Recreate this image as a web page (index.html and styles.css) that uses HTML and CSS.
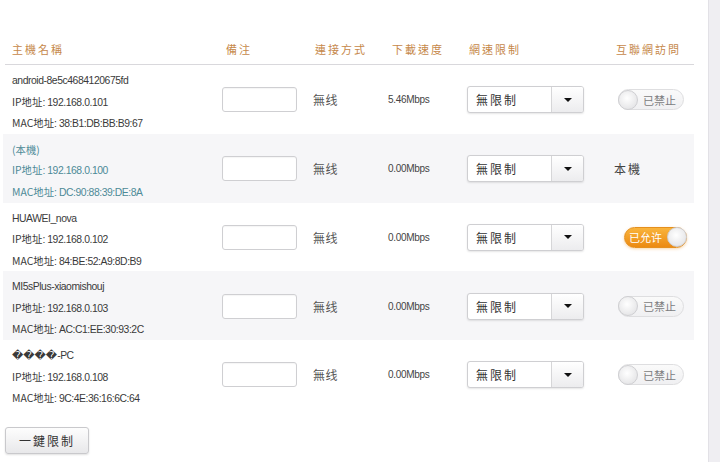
FILE: index.html
```html
<!DOCTYPE html>
<html lang="zh-Hant">
<head>
<meta charset="utf-8">
<title>終端設備</title>
<link rel="stylesheet" href="styles.css">
</head>
<body>
<div class="page">
  <div class="panel">
    <div class="table">
      <div class="head">
        <div class="h h-name">主機名稱</div>
        <div class="h h-remark">備注</div>
        <div class="h">連接方式</div>
        <div class="h h-speed">下載速度</div>
        <div class="h">網速限制</div>
        <div class="h">互聯網訪問</div>
      </div>

      <div class="row">
        <div class="name">
          <div class="host">android-8e5c4684120675fd</div>
          <div class="line"><span class="cjk">IP地址</span>: 192.168.0.101</div>
          <div class="line"><span class="cjk">MAC地址</span>: 38:B1:DB:BB:B9:67</div>
        </div>
        <div class="remark"><input class="remark-input" type="text"></div>
        <div class="conn">無线</div>
        <div class="speed">5.46Mbps</div>
        <div class="limit"><div class="select"><span class="select-text">無限制</span><span class="select-btn"><i class="caret"></i></span></div></div>
        <div class="access"><div class="toggle off"><span class="knob"></span><span class="toggle-text">已禁止</span></div></div>
      </div>

      <div class="row alt self">
        <div class="name">
          <div class="host cjk">(本機)</div>
          <div class="line"><span class="cjk">IP地址</span>: 192.168.0.100</div>
          <div class="line"><span class="cjk">MAC地址</span>: DC:90:88:39:DE:8A</div>
        </div>
        <div class="remark"><input class="remark-input" type="text"></div>
        <div class="conn">無线</div>
        <div class="speed">0.00Mbps</div>
        <div class="limit"><div class="select"><span class="select-text">無限制</span><span class="select-btn"><i class="caret"></i></span></div></div>
        <div class="access"><span class="local">本機</span></div>
      </div>

      <div class="row">
        <div class="name">
          <div class="host">HUAWEI_nova</div>
          <div class="line"><span class="cjk">IP地址</span>: 192.168.0.102</div>
          <div class="line"><span class="cjk">MAC地址</span>: 84:BE:52:A9:8D:B9</div>
        </div>
        <div class="remark"><input class="remark-input" type="text"></div>
        <div class="conn">無线</div>
        <div class="speed">0.00Mbps</div>
        <div class="limit"><div class="select"><span class="select-text">無限制</span><span class="select-btn"><i class="caret"></i></span></div></div>
        <div class="access"><div class="toggle on"><span class="toggle-text">已允许</span><span class="knob"></span></div></div>
      </div>

      <div class="row alt">
        <div class="name">
          <div class="host">MI5sPlus-xiaomishouj</div>
          <div class="line"><span class="cjk">IP地址</span>: 192.168.0.103</div>
          <div class="line"><span class="cjk">MAC地址</span>: AC:C1:EE:30:93:2C</div>
        </div>
        <div class="remark"><input class="remark-input" type="text"></div>
        <div class="conn">無线</div>
        <div class="speed">0.00Mbps</div>
        <div class="limit"><div class="select"><span class="select-text">無限制</span><span class="select-btn"><i class="caret"></i></span></div></div>
        <div class="access"><div class="toggle off"><span class="knob"></span><span class="toggle-text">已禁止</span></div></div>
      </div>

      <div class="row">
        <div class="name">
          <div class="host"><span class="bad">����</span>-PC</div>
          <div class="line"><span class="cjk">IP地址</span>: 192.168.0.108</div>
          <div class="line"><span class="cjk">MAC地址</span>: 9C:4E:36:16:6C:64</div>
        </div>
        <div class="remark"><input class="remark-input" type="text"></div>
        <div class="conn">無线</div>
        <div class="speed">0.00Mbps</div>
        <div class="limit"><div class="select"><span class="select-text">無限制</span><span class="select-btn"><i class="caret"></i></span></div></div>
        <div class="access"><div class="toggle off"><span class="knob"></span><span class="toggle-text">已禁止</span></div></div>
      </div>
    </div>

    <button class="btn" type="button">一鍵限制</button>
  </div>
  <div class="strip"></div>
</div>
</body>
</html>
```

FILE: styles.css
```css
html, body {
  margin: 0;
  padding: 0;
}

body {
  background: #efeef2;
  font-family: "Liberation Sans", "Noto Sans CJK TC", sans-serif;
  color: #333;
  width: 720px;
  height: 462px;
  overflow: hidden;
}

.page {
  display: flex;
  height: 462px;
}

.panel {
  width: 708px;
  background: #fff;
  padding-left: 3px;
  box-sizing: border-box;
  display: flex;
  flex-direction: column;
  align-items: flex-start;
}

.strip {
  flex: 1;
  background: #efeef2;
  border-left: 1px solid #e2e1e6;
}

.table {
  width: 691px;
}

.head,
.row {
  display: grid;
  grid-template-columns: 219px 91px 75px 79px 147px 1fr;
}

.head {
  height: 65px;
  box-sizing: border-box;
  border-bottom: 1px solid #d9d8dc;
  align-items: end;
  padding-bottom: 7px;
  margin-left: 2px;
}

.h {
  font-family: "Noto Sans CJK TC", sans-serif;
  font-size: 11px;
  letter-spacing: 2px;
  color: #c6884a;
  line-height: 16px;
}

.h-name { padding-left: 7px; }
.h-remark { padding-left: 2px; }
.h-speed { padding-left: 2px; }

.row {
  height: 68.75px;
  align-items: center;
}

.row.alt {
  background: #f6f6f8;
}

.name {
  align-self: start;
  padding-top: 6px;
  padding-left: 9px;
}

.host,
.line {
  font-size: 10.4px;
  line-height: 20.5px;
  letter-spacing: -0.45px;
  white-space: nowrap;
  color: #3a3a3a;
}

.line {
  line-height: 20.5px;
}

.line .cjk,
.host.cjk {
  font-family: "Noto Sans CJK TC", sans-serif;
  letter-spacing: 0;
}

.bad {
  font-family: "DejaVu Sans", sans-serif;
  font-size: 11px;
  letter-spacing: 0;
}

.self .host,
.self .line {
  color: #4d8a97;
}

.remark-input {
  display: block;
  width: 75px;
  height: 25px;
  box-sizing: border-box;
  border: 1px solid #cfcfd2;
  border-radius: 3px;
  background: #fff;
  padding: 0;
  margin: 0;
  box-shadow: inset 0 1px 1px rgba(0, 0, 0, 0.04);
}

.conn {
  font-family: "Noto Sans CJK TC", sans-serif;
  font-size: 12px;
  letter-spacing: 0.5px;
  color: #555;
}

.speed {
  font-size: 10px;
  letter-spacing: -0.3px;
  color: #444;
}

.select {
  display: flex;
  width: 117px;
  height: 27px;
  box-sizing: border-box;
  border: 1px solid #cfcfd2;
  border-radius: 3px;
  background: #fff;
  box-shadow: 0 1px 2px rgba(0, 0, 0, 0.1);
  overflow: hidden;
}

.select-text {
  width: 84px;
  box-sizing: border-box;
  padding-left: 8px;
  font-family: "Noto Sans CJK TC", sans-serif;
  font-size: 12px;
  letter-spacing: 2px;
  line-height: 25px;
  color: #333;
  border-right: 1px solid #d6d6d8;
}

.select-btn {
  flex: 1;
  display: flex;
  align-items: center;
  justify-content: center;
  background: linear-gradient(#ffffff, #ececee);
}

.caret {
  width: 0;
  height: 0;
  border-left: 4px solid transparent;
  border-right: 4px solid transparent;
  border-top: 4px solid #111;
}

.access {
  padding-left: 4px;
}

.local {
  font-family: "Noto Sans CJK TC", sans-serif;
  font-size: 12px;
  letter-spacing: 2px;
  color: #444;
  margin-left: -4px;
}

.toggle {
  display: flex;
  align-items: center;
  height: 21px;
  box-sizing: border-box;
  border-radius: 11px;
  font-family: "Noto Sans CJK SC", sans-serif;
  font-size: 11px;
}

.toggle.off {
  width: 66px;
  border: 1px solid #dedee0;
  background: linear-gradient(#fafafa, #f0f0f2);
}

.toggle.on {
  width: 63px;
  margin-left: 6px;
  border: 1px solid #e5901e;
  background: linear-gradient(#f9b43c, #ec8a12);
  box-shadow: 0 1px 3px rgba(236, 138, 18, 0.35);
}

.knob {
  width: 20px;
  height: 20px;
  box-sizing: border-box;
  border-radius: 50%;
  border: 1px solid #cfcfd2;
  background: radial-gradient(circle at 45% 40%, #ffffff, #e4e4e6 80%);
  flex: none;
  margin: -1px;
}

.toggle.off .toggle-text {
  color: #7c7c80;
  padding-left: 6px;
}

.toggle.on .toggle-text {
  color: #fff;
  padding-left: 4px;
  flex: 1;
}

.btn {
  margin-top: 18px;
  margin-left: 2px;
  width: 84px;
  height: 27px;
  border: 1px solid #c9c9cc;
  border-radius: 3px;
  background: linear-gradient(#fdfdfd, #e8e8ea);
  box-shadow: 0 1px 2px rgba(0, 0, 0, 0.12);
  font-family: "Noto Sans CJK TC", sans-serif;
  font-size: 12px;
  letter-spacing: 2px;
  color: #333;
  padding: 0;
}
```
